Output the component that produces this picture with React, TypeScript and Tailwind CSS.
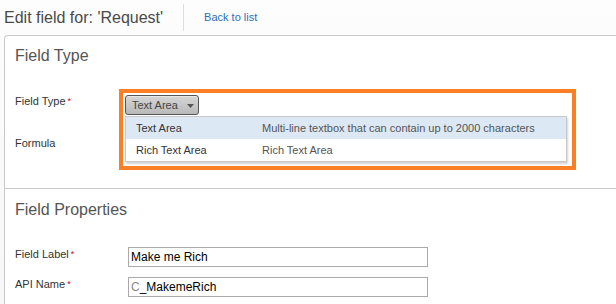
const font = { fontFamily: '"Liberation Sans", Arial, sans-serif' };

function Required() {
  return <span className="ml-[2px] text-[9px] align-top text-[#d0021b]">*</span>;
}

function Label({ text, required }: { text: string; required?: boolean }) {
  return (
    <div className="w-[113px] shrink-0 mt-[1px] text-[11px] leading-[12px] text-[#333]">
      {text}
      {required && <Required />}
    </div>
  );
}

export default function App() {
  return (
    <div className="w-[616px] h-[304px] overflow-hidden bg-gradient-to-b from-[#fdfdfd] to-[#f7f7f7]" style={font}>
      {/* Header */}
      <div className="h-[35px] pl-1 flex items-center">
        <h1 className="text-[16px] leading-5 text-[#4a4a4a]">Edit field for: 'Request'</h1>
        <div className="ml-5 w-px h-[27px] bg-[#dedede]" />
        <a className="ml-5 text-[11px] text-[#2a6ebb]">Back to list</a>
      </div>

      {/* Panel */}
      <div className="ml-1 h-[269px] bg-white border-l border-t border-[#c8c8c8] rounded-tl-[4px]">
        {/* Field Type section */}
        <section className="pl-[10px] pt-[10px] pb-[38px] relative">
          <h2 className="text-[16px] leading-5 text-[#555]">Field Type</h2>

          <div className="mt-[29px] flex items-start">
            <div className="w-[110px] shrink-0 text-[11px] leading-[12px] text-[#333]">
              Field Type
              <Required />
            </div>
            <div className="relative">
              <button className="h-[20px] w-[74px] flex items-center pl-[6px] gap-[9px] rounded-[3px] border border-[#555] bg-gradient-to-b from-[#d6d6d6] to-[#b9b9b9] shadow-[inset_0_1px_0_#e8e8e8] text-[11px] text-[#444]">
                Text Area
                <svg width="7" height="4" viewBox="0 0 7 4" className="mt-[1px]">
                  <path d="M0 0h7L3.5 4z" fill="#555" />
                </svg>
              </button>

              {/* Open menu */}
              <div className="absolute left-0 top-[21px] w-[442px] border border-[#c8c8c8] bg-white shadow-[1px_2px_2px_rgba(0,0,0,0.18)] z-10">
                <div className="h-[22px] flex items-center pl-[10px] bg-[#dce8f3] text-[11px]">
                  <span className="w-[126px] text-[#333]">Text Area</span>
                  <span className="text-[#555]">Multi-line textbox that can contain up to 2000 characters</span>
                </div>
                <div className="h-[22px] flex items-center pl-[10px] text-[11px]">
                  <span className="w-[126px] text-[#333]">Rich Text Area</span>
                  <span className="text-[#555]">Rich Text Area</span>
                </div>
              </div>

              {/* Highlight frame */}
              <div className="pointer-events-none absolute -left-[6px] -top-[6px] w-[457px] h-[81px] border-4 border-[#fb7f24] z-20" />
            </div>
          </div>

          <div className="mt-[21px] text-[11px] leading-[14px] text-[#333]">Formula</div>
        </section>

        {/* Field Properties section */}
        <section className="border-t border-[#cccccc] pl-[10px] pt-[11px]">
          <h2 className="text-[16px] leading-5 text-[#555]">Field Properties</h2>

          <div className="mt-[27px] flex items-start">
            <Label text="Field Label" required />
            <div className="w-[300px] h-[20px] border border-[#aaa] flex items-center pl-[2px] text-[12px] text-black">
              Make me Rich
            </div>
          </div>

          <div className="mt-[10px] flex items-start">
            <Label text="API Name" required />
            <div className="w-[300px] h-[20px] border border-[#aaa] flex items-center pl-[2px] text-[12px] text-black">
              <span className="text-[#888]">C</span>_MakemeRich
            </div>
          </div>
        </section>
      </div>
    </div>
  );
}
